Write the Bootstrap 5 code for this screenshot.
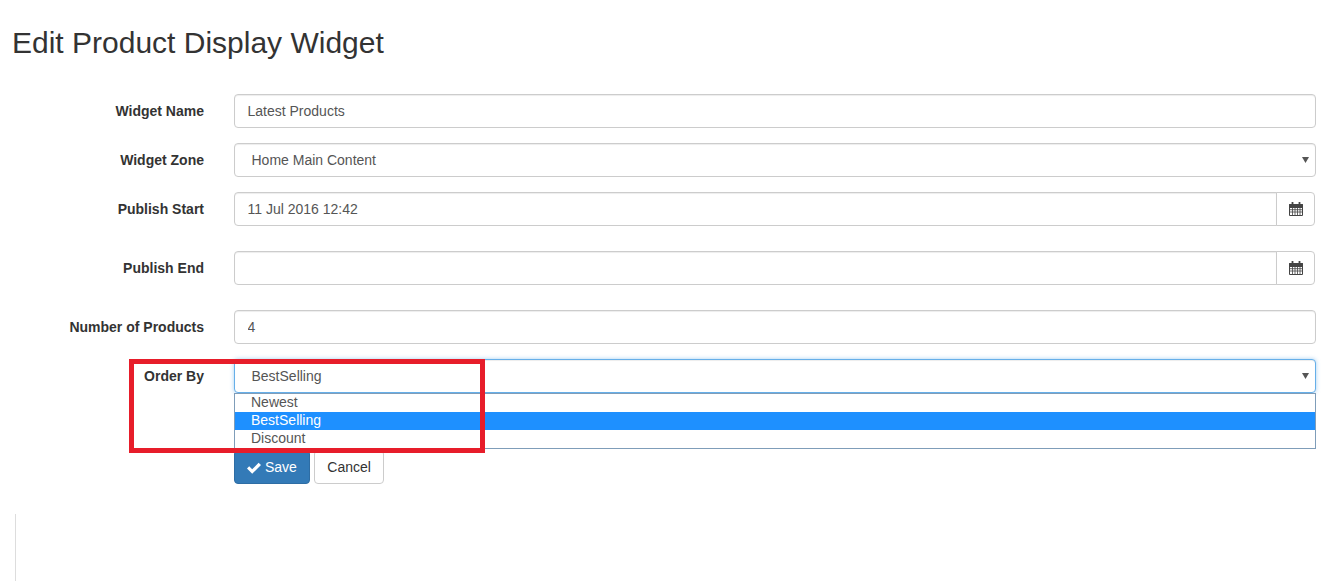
<!DOCTYPE html>
<html lang="en">
<head>
    <meta charset="UTF-8">
    <title>Edit Product Display Widget</title>
    <link href="https://cdn.jsdelivr.net/npm/bootstrap@5.3.0/dist/css/bootstrap.min.css" rel="stylesheet">
    <style>
        body {
            background-color: #fff;
            color: #333;
            font-family: "Liberation Sans", Arial, sans-serif;
            font-size: 14px;
            line-height: 20px;
            height: 581px;
            overflow: hidden;
        }
        .page-wrap { padding: 0 8px 0 12px; }
        .page-title {
            font-size: 30px;
            line-height: 33px;
            font-weight: 400;
            color: #333;
            margin: 26px 0 35px;
        }
        .field-row { display: flex; margin-bottom: 15px; }
        .field-row.date-row { margin-bottom: 25px; padding-right: 1px; }
        .field-label {
            width: 192px;
            margin: 0 30px 0 0;
            padding-top: 7px;
            text-align: right;
            font-weight: 700;
            line-height: 20px;
        }
        .field-body { flex: 1 1 0; min-width: 0; position: relative; }
        .field-input, .field-input:focus {
            height: 34px;
            padding: 6px 12.5px;
            font-size: 14px;
            line-height: 20px;
            color: #555;
            border: 1px solid #ccc;
            border-radius: 4px;
            box-shadow: inset 0 1px 1px rgba(0,0,0,.075);
        }
        .form-select.field-input {
            padding-left: 16.5px;
            background-size: 7px 6px;
            background-position: right 6px center;
            background-image: url("data:image/svg+xml,%3csvg xmlns='http://www.w3.org/2000/svg' viewBox='0 0 7 6'%3e%3cpath fill='%23555' d='M0 0h7L3.5 6z'/%3e%3c/svg%3e");
        }
        .form-select.select-open {
            border-color: #66afe9;
            box-shadow: inset 0 1px 1px rgba(0,0,0,.075), 0 0 4px rgba(102,175,233,.6);
        }
        .cal-addon {
            width: 39px;
            justify-content: center;
            padding: 0;
            background: #fff;
            border: 1px solid #ccc;
            border-radius: 0 4px 4px 0;
            color: #444;
        }
        .open-list {
            position: absolute;
            top: 34px;
            left: 0;
            right: 0;
            height: 56px;
            padding: 0;
            margin: 0;
            list-style: none;
            background: #fff;
            border: 1px solid #7f9db9;
            color: #555;
            z-index: 2;
        }
        .open-list li { height: 18px; line-height: 16px; padding-left: 16px; }
        .open-list li.is-picked { background: #1e90ff; color: #fff; }
        .btn-save, .btn-save:hover {
            height: 34px;
            padding: 6px 12px;
            font-size: 14px;
            line-height: 20px;
            background: #337ab7;
            border: 1px solid #2e6da4;
            color: #fff;
            border-radius: 4px;
        }
        .btn-cancel, .btn-cancel:hover {
            height: 34px;
            padding: 6px 12.5px;
            font-size: 14px;
            line-height: 20px;
            background: #fff;
            border: 1px solid #ccc;
            color: #333;
            border-radius: 4px;
        }
        .action-row { margin-left: 222px; margin-top: 57px; gap: 4px; }
        .red-frame {
            position: absolute;
            left: 129px;
            top: 359px;
            width: 356px;
            height: 94px;
            border: 5px solid #e71d2a;
            z-index: 3;
            pointer-events: none;
        }
        .rule-block {
            margin: 30px 0 0 3px;
            height: 80px;
            border-left: 1px solid #ddd;
        }
    </style>
</head>
<body>
    <div class="page-wrap">
        <h1 class="page-title">Edit Product Display Widget</h1>

        <form>
            <div class="field-row">
                <label class="field-label">Widget Name</label>
                <div class="field-body">
                    <input type="text" class="form-control field-input" value="Latest Products">
                </div>
            </div>
            <div class="field-row">
                <label class="field-label">Widget Zone</label>
                <div class="field-body">
                    <select class="form-select field-input"><option>Home Main Content</option></select>
                </div>
            </div>
            <div class="field-row date-row">
                <label class="field-label">Publish Start</label>
                <div class="field-body input-group">
                    <input type="text" class="form-control field-input" value="11 Jul 2016 12:42">
                    <span class="input-group-text cal-addon">
                        <svg width="14" height="14" viewBox="0 0 14 14" fill="none" stroke="currentColor"><path d="M.5 2.5h13v11H.5z"/><path d="M.5 2.5h13v3H.5z" fill="currentColor"/><path d="M.5 7.7h13M.5 10h13M3.5 5v8.5M6 5v8.5M8.5 5v8.5M11 5v8.5" stroke-width=".8"/><path d="M3.5 0v3.5M10.5 0v3.5" stroke-width="1.8"/></svg>
                    </span>
                </div>
            </div>
            <div class="field-row date-row">
                <label class="field-label">Publish End</label>
                <div class="field-body input-group">
                    <input type="text" class="form-control field-input" value="">
                    <span class="input-group-text cal-addon">
                        <svg width="14" height="14" viewBox="0 0 14 14" fill="none" stroke="currentColor"><path d="M.5 2.5h13v11H.5z"/><path d="M.5 2.5h13v3H.5z" fill="currentColor"/><path d="M.5 7.7h13M.5 10h13M3.5 5v8.5M6 5v8.5M8.5 5v8.5M11 5v8.5" stroke-width=".8"/><path d="M3.5 0v3.5M10.5 0v3.5" stroke-width="1.8"/></svg>
                    </span>
                </div>
            </div>
            <div class="field-row">
                <label class="field-label">Number of Products</label>
                <div class="field-body">
                    <input type="text" class="form-control field-input" value="4">
                </div>
            </div>
            <div class="field-row">
                <label class="field-label">Order By</label>
                <div class="field-body">
                    <select class="form-select field-input select-open"><option>BestSelling</option></select>
                    <ul class="open-list">
                        <li>Newest</li>
                        <li class="is-picked">BestSelling</li>
                        <li>Discount</li>
                    </ul>
                </div>
            </div>
            <div class="action-row d-flex">
                <button type="button" class="btn btn-save">
                    <svg width="14" height="12" viewBox="0 0 14 12" fill="#fff"><path d="M0 6.5 2.2 4.3 5.2 7.3 11.6.8 14 3 5.2 11.8z"/></svg>
                    Save
                </button>
                <button type="button" class="btn btn-cancel">Cancel</button>
            </div>
        </form>
        <div class="rule-block"></div>
    </div>
    <div class="red-frame"></div>
    <script src="https://cdn.jsdelivr.net/npm/bootstrap@5.3.0/dist/js/bootstrap.bundle.min.js"></script>
</body>
</html>
